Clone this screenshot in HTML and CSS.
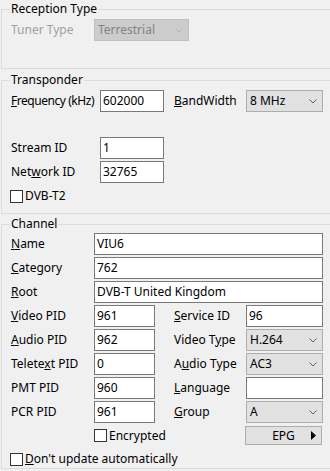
FILE: index.html
```html
<!DOCTYPE html>
<html>
<head>
<meta charset="utf-8">
<link rel="stylesheet" href="styles.css">
</head>
<body>
<fieldset class="group g-reception">
  <legend class="legend">Reception Type</legend>
  <div class="row r-first">
    <span class="lbl w84 dis">Tuner Type</span>
    <div class="box combo combo-dis w95"><span>Terrestrial</span><svg class="chev" width="8" height="5" viewBox="0 0 8 5"><polyline points="0.5,0.5 4,4 7.5,0.5" fill="none" stroke="#b4b4b4" stroke-width="1"/></svg></div>
  </div>
</fieldset>

<fieldset class="group g-transponder">
  <legend class="legend">Transponder</legend>
  <div class="row r-first">
    <span class="lbl w90 tight"><u>F</u>requency (kHz)</span>
    <div class="box field w64">602000</div>
    <span class="lbl w73 ml9"><u>B</u>andWidth</span>
    <div class="box combo w77"><span>8 MHz</span><svg class="chev" width="8" height="5" viewBox="0 0 8 5"><polyline points="0.5,0.5 4,4 7.5,0.5" fill="none" stroke="#606060" stroke-width="1"/></svg></div>
  </div>
  <div class="row r-stream">
    <span class="lbl w90">Stream ID</span>
    <div class="box field w64">1</div>
  </div>
  <div class="row">
    <span class="lbl w90">Net<u>w</u>ork ID</span>
    <div class="box field w64">32765</div>
  </div>
  <div class="row chkrow r-dvb">
    <span class="chk"></span><span class="chklbl">DVB-T2</span>
  </div>
</fieldset>

<fieldset class="group g-channel">
  <legend class="legend">Channel</legend>
  <div class="row r-name">
    <span class="lbl w84"><u>N</u>ame</span>
    <div class="box field w229">VIU6</div>
  </div>
  <div class="row">
    <span class="lbl w84"><u>C</u>ategory</span>
    <div class="box field w229">762</div>
  </div>
  <div class="row">
    <span class="lbl w84"><u>R</u>oot</span>
    <div class="box field w229">DVB-T United Kingdom</div>
  </div>
  <div class="row">
    <span class="lbl w84"><u>V</u>ideo PID</span>
    <div class="box field w61">961</div>
    <span class="lbl w73 ml18"><u>S</u>ervice ID</span>
    <div class="box field w77">96</div>
  </div>
  <div class="row">
    <span class="lbl w84"><u>A</u>udio PID</span>
    <div class="box field w61">962</div>
    <span class="lbl w73 ml18">Video T<u>y</u>pe</span>
    <div class="box combo w77"><span>H.264</span><svg class="chev" width="8" height="5" viewBox="0 0 8 5"><polyline points="0.5,0.5 4,4 7.5,0.5" fill="none" stroke="#606060" stroke-width="1"/></svg></div>
  </div>
  <div class="row">
    <span class="lbl w84">Telete<u>x</u>t PID</span>
    <div class="box field w61">0</div>
    <span class="lbl w73 ml18">A<u>u</u>dio Type</span>
    <div class="box combo w77"><span>AC3</span><svg class="chev" width="8" height="5" viewBox="0 0 8 5"><polyline points="0.5,0.5 4,4 7.5,0.5" fill="none" stroke="#606060" stroke-width="1"/></svg></div>
  </div>
  <div class="row">
    <span class="lbl w84">PMT PID</span>
    <div class="box field w61">960</div>
    <span class="lbl w73 ml18"><u>L</u>anguage</span>
    <div class="box field w77"></div>
  </div>
  <div class="row">
    <span class="lbl w84">PCR PID</span>
    <div class="box field w61">961</div>
    <span class="lbl w73 ml18"><u>G</u>roup</span>
    <div class="box combo w77"><span>A</span><svg class="chev" width="8" height="5" viewBox="0 0 8 5"><polyline points="0.5,0.5 4,4 7.5,0.5" fill="none" stroke="#606060" stroke-width="1"/></svg></div>
  </div>
  <div class="row r-epg">
    <span class="spacer w84"></span>
    <span class="chk"></span><span class="chklbl enc">Encrypted</span>
    <div class="btn w77"><span class="btn-text">EPG</span><svg class="tri" width="5" height="9" viewBox="0 0 5 9"><polygon points="0,0 5,4.5 0,9" fill="#000"/></svg></div>
  </div>
  <div class="row chkrow r-upd">
    <span class="chk"></span><span class="chklbl"><u>D</u>on't update automatically</span>
  </div>
</fieldset>
</body>
</html>
```

FILE: styles.css
```css
html, body {
  margin: 0;
  padding: 0;
}
body {
  width: 330px;
  height: 471px;
  overflow: hidden;
  background: #f0f0f0;
  color: #000;
  font-family: "Noto Sans", "Liberation Sans", sans-serif;
  font-size: 12px;
}
.group {
  box-sizing: border-box;
  width: 340px;
  min-width: 0;
  margin: 0 0 0 1px;
  padding: 0 0 0 8px;
  border: 1px solid #dcdcdc;
}
.legend {
  padding: 0 1px;
  margin-left: 0;
  line-height: 16px;
}
.g-reception { margin-top: 1px; padding-bottom: 27px; }
.g-transponder { margin-top: 3px; padding-bottom: 9px; }
.g-channel { margin-top: 2px; padding-bottom: 1px; }

.row {
  display: flex;
  align-items: center;
  height: 22px;
  margin-top: 2px;
}
.r-stream { margin-top: 25px; }
.r-name { margin-top: 1px; }
.r-dvb { margin-top: 5px; height: 16px; }
.r-epg { margin-top: 3px; height: 19px; }
.r-upd { margin-top: 6px; height: 16px; }

.lbl {
  box-sizing: border-box;
  padding-left: 1px;
  white-space: nowrap;
  line-height: 16px;
}
.tight { letter-spacing: -0.45px; }
.dis { color: #a0a0a0; }
.spacer { display: block; height: 1px; }
.w84 { width: 84px; flex: none; }
.w90 { width: 90px; flex: none; }
.w73 { width: 73px; flex: none; }
.ml9 { margin-left: 9px; }
.ml18 { margin-left: 18px; }

.box {
  box-sizing: border-box;
  height: 22px;
  flex: none;
  display: flex;
  align-items: center;
  white-space: nowrap;
  line-height: 16px;
}
.w61 { width: 61px; }
.w64 { width: 64px; }
.w77 { width: 77px; }
.w95 { width: 95px; }
.w229 { width: 229px; }

.field {
  border: 1px solid #7a7a7a;
  background: #fff;
  padding: 0 2px;
}
.combo {
  border: 1px solid #adadad;
  background: #e1e1e1;
  padding: 0 5px 0 3px;
  justify-content: space-between;
}
.combo-dis {
  border-color: #bfbfbf;
  background: #cccccc;
  color: #838383;
}
.chev { display: block; flex: none; }

.chk {
  box-sizing: border-box;
  display: block;
  flex: none;
  width: 13px;
  height: 13px;
  border: 1px solid #333;
  background: #fff;
}
.chklbl {
  margin-left: 2px;
  white-space: nowrap;
  line-height: 16px;
}
.enc { width: 136px; flex: none; }

.btn {
  box-sizing: border-box;
  height: 19px;
  flex: none;
  border: 1px solid #adadad;
  background: #e1e1e1;
  display: grid;
  grid-template-columns: 1fr auto 1fr;
  align-items: center;
  line-height: 16px;
}
.btn-text { grid-column: 2; }
.tri { grid-column: 3; justify-self: end; margin-right: 5px; display: block; }
```
